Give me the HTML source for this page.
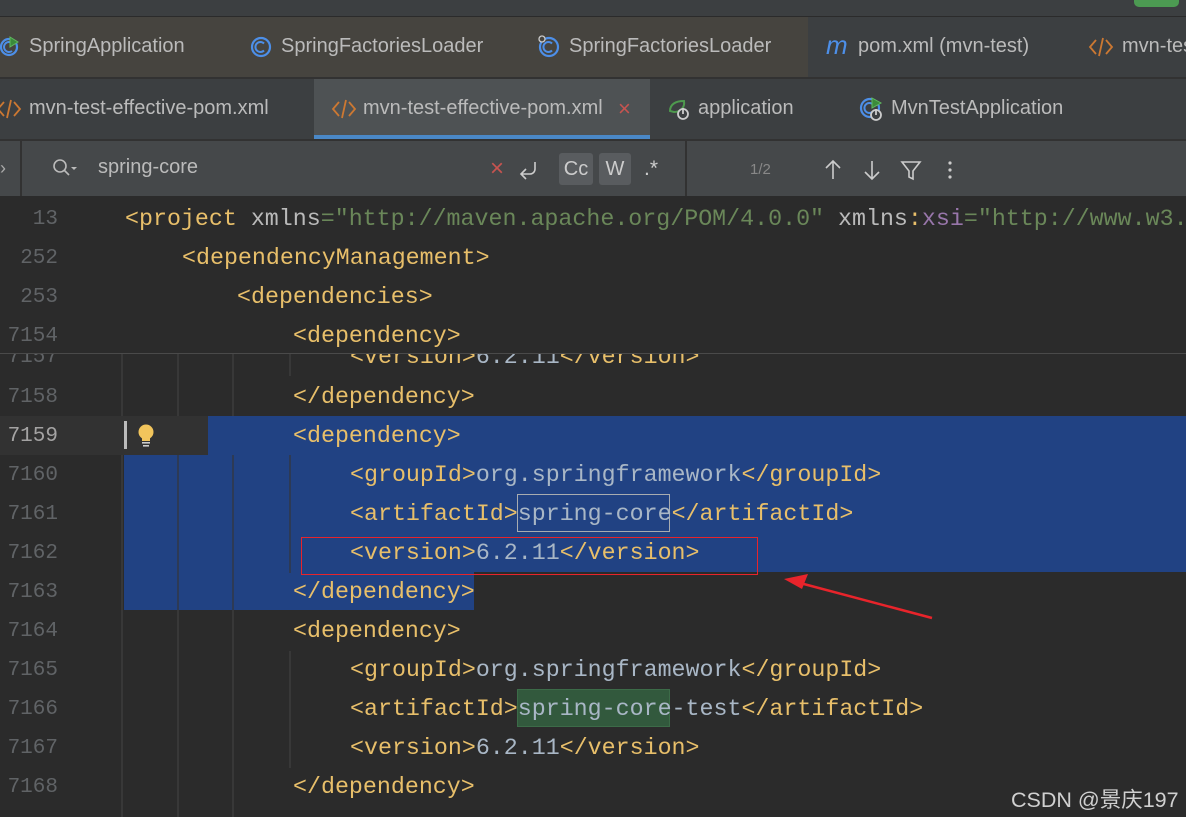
<!DOCTYPE html>
<html><head><meta charset="utf-8"><style>
*{margin:0;padding:0;box-sizing:border-box}
html,body{width:1186px;height:817px;overflow:hidden}
body{background:#2b2b2b;position:relative;font-family:"Liberation Sans","Noto Sans CJK SC",sans-serif}
#w{position:absolute;left:0;top:0;width:1186px;height:817px;overflow:hidden}
.a{position:absolute}
.tab{position:absolute;font-size:20px;color:#bbbbbb;white-space:nowrap}
.code{position:absolute;font-family:"Liberation Mono",monospace;font-size:23.3px;white-space:pre;line-height:39px;height:39px}
.t{color:#e8bf6a}.v{color:#a9b7c6}.s{color:#6a8759}.at{color:#bababa}.p{color:#9876aa}
.ln{position:absolute;left:0;width:58px;text-align:right;font-family:"Liberation Mono",monospace;font-size:21px;color:#606366;line-height:39px;height:39px}
.g{position:absolute;width:2px;background:#383838}
</style></head><body><div id="w">
<!-- top bar -->
<div class="a" style="left:0;top:0;width:1186px;height:16px;background:#3c3f41"></div>
<div class="a" style="left:1134px;top:-6px;width:45px;height:13px;background:#4c9a52;border-radius:5px"></div>
<!-- tab row 1 -->
<div class="a" style="left:0;top:17px;width:1186px;height:60px;background:#3c3f41"></div>
<div class="a" style="left:0;top:17px;width:808px;height:60px;background:#46443f"></div>
<div class="a" style="left:0;top:77px;width:1186px;height:2px;background:#323232"></div>
<svg class="a" style="left:0;top:35px" width="22" height="24"><circle cx="9" cy="12" r="8" fill="none" stroke="#4d8fe8" stroke-width="2.2"/><path d="M12 8a5 5 0 1 0 0 8" fill="none" stroke="#4d8fe8" stroke-width="2"/><path d="M10 2l8 5-8 5z" fill="#3b8a3b" stroke="#5fb85f" stroke-width="1"/></svg>
<div class="tab" style="left:29px;top:35px">SpringApplication</div>
<svg class="a" style="left:250px;top:36px" width="22" height="22"><circle cx="11" cy="11" r="9" fill="none" stroke="#4d8fe8" stroke-width="2.2"/><path d="M14 7.5a5 5 0 1 0 0 7" fill="none" stroke="#4d8fe8" stroke-width="2"/></svg>
<div class="tab" style="left:281px;top:35px">SpringFactoriesLoader</div>
<svg class="a" style="left:537px;top:34px" width="24" height="24"><circle cx="12" cy="13" r="9" fill="none" stroke="#4d8fe8" stroke-width="2.2"/><path d="M15 9.5a5 5 0 1 0 0 7" fill="none" stroke="#4d8fe8" stroke-width="2"/><circle cx="5" cy="5" r="3" fill="#46443f" stroke="#ccc" stroke-width="1.3"/></svg>
<div class="tab" style="left:569px;top:35px">SpringFactoriesLoader</div>
<div class="a" style="left:826px;top:30px;font-size:26px;font-style:italic;color:#4d8fe8">m</div>
<div class="tab" style="left:858px;top:35px">pom.xml (mvn-test)</div>
<svg class="a" style="left:1088px;top:36px" width="26" height="22"><path d="M8 4L2 11l6 7M18 4l6 7-6 7M15 2l-4 18" fill="none" stroke="#cc7832" stroke-width="1.8"/></svg>
<div class="tab" style="left:1122px;top:35px">mvn-test</div>
<!-- tab row 2 -->
<div class="a" style="left:0;top:79px;width:1186px;height:60px;background:#3c3f41"></div>
<div class="a" style="left:314px;top:79px;width:336px;height:60px;background:#4e5254"></div>
<div class="a" style="left:314px;top:135px;width:336px;height:4px;background:#4a88c7"></div>
<svg class="a" style="left:-4px;top:98px" width="26" height="22"><path d="M8 4L2 11l6 7M18 4l6 7-6 7M15 2l-4 18" fill="none" stroke="#cc7832" stroke-width="1.8"/></svg>
<div class="tab" style="left:29px;top:97px">mvn-test-effective-pom.xml</div>
<svg class="a" style="left:331px;top:98px" width="26" height="22"><path d="M8 4L2 11l6 7M18 4l6 7-6 7M15 2l-4 18" fill="none" stroke="#cc7832" stroke-width="1.8"/></svg>
<div class="tab" style="left:363px;top:97px">mvn-test-effective-pom.xml</div>
<div class="a" style="left:618px;top:96px;color:#c75450;font-size:22px">×</div>
<svg class="a" style="left:667px;top:96px" width="26" height="26"><path d="M3 15c0-7 6-10 14-10 1 6-3 11-10 11z" fill="none" stroke="#4e9a4e" stroke-width="2"/><circle cx="16" cy="18" r="5" fill="#3c3f41" stroke="#ccc" stroke-width="1.8"/><path d="M16 12v6" stroke="#ccc" stroke-width="1.8"/></svg>
<div class="tab" style="left:698px;top:97px">application</div>
<svg class="a" style="left:859px;top:95px" width="28" height="28"><circle cx="11" cy="13" r="9" fill="none" stroke="#4d8fe8" stroke-width="2.2"/><path d="M14 9.5a5 5 0 1 0 0 7" fill="none" stroke="#4d8fe8" stroke-width="2"/><path d="M13 3l9 5-9 5z" fill="#3b8a3b" stroke="#5fb85f"/><circle cx="17" cy="20" r="5" fill="#3c3f41" stroke="#ccc" stroke-width="1.8"/><path d="M17 14v6" stroke="#ccc" stroke-width="1.8"/></svg>
<div class="tab" style="left:891px;top:97px">MvnTestApplication</div>
<!-- search bar -->
<div class="a" style="left:0;top:139px;width:1186px;height:2px;background:#323232"></div>
<div class="a" style="left:0;top:141px;width:1186px;height:55px;background:#45484a"></div>
<div class="a" style="left:20px;top:141px;width:2px;height:55px;background:#323232"></div>
<div class="a" style="left:685px;top:141px;width:2px;height:55px;background:#323232"></div>
<div class="a" style="left:0;top:158px;color:#aaa;font-size:18px">›</div>
<svg class="a" style="left:52px;top:158px" width="26" height="22"><circle cx="8" cy="8" r="6" fill="none" stroke="#bbb" stroke-width="1.6"/><path d="M12 12l5 5" stroke="#bbb" stroke-width="1.6"/><path d="M19 9l3 3 3-3z" fill="#bbb"/></svg>
<div class="tab" style="left:98px;top:156px">spring-core</div>
<div class="a" style="left:490px;top:157px;color:#c75450;font-size:24px;line-height:24px">×</div>
<svg class="a" style="left:518px;top:158px" width="26" height="24"><path d="M17 4v7a5 5 0 0 1-5 5H4M8 11l-5 5 5 5" fill="none" stroke="#ccc" stroke-width="1.6"/></svg>
<div class="a" style="left:559px;top:153px;width:34px;height:32px;background:#595c5f;border-radius:3px;color:#ccc;font-size:20px;text-align:center;line-height:32px">Cc</div>
<div class="a" style="left:599px;top:153px;width:32px;height:32px;background:#595c5f;border-radius:3px;color:#ccc;font-size:20px;text-align:center;line-height:32px">W</div>
<div class="a" style="left:644px;top:157px;color:#ccc;font-size:21px">.*</div>
<div class="a" style="left:750px;top:161px;color:#888;font-size:15px">1/2</div>
<svg class="a" style="left:820px;top:158px" width="150" height="24"><path d="M13 3v18M6 10l7-7 7 7" fill="none" stroke="#ccc" stroke-width="1.6"/><path d="M52 3v18M45 14l7 7 7-7" fill="none" stroke="#ccc" stroke-width="1.6"/><path d="M82 4h18l-7 9v8l-4-2v-6z" fill="none" stroke="#ccc" stroke-width="1.6"/><circle cx="130" cy="5" r="1.6" fill="#ccc"/><circle cx="130" cy="12" r="1.6" fill="#ccc"/><circle cx="130" cy="19" r="1.6" fill="#ccc"/></svg>
<!-- editor -->
<div class="a" style="left:0;top:196px;width:1186px;height:621px;background:#2b2b2b"></div>
<div class="g" style="left:121px;top:354px;height:463px"></div>
<div class="g" style="left:177px;top:354px;height:463px"></div>
<div class="g" style="left:232px;top:354px;height:463px"></div>
<div class="g" style="left:289px;top:354px;height:22px"></div>
<div class="g" style="left:289px;top:651px;height:117px"></div>
<div class="a" style="left:0;top:416px;width:208px;height:39px;background:#323232"></div>
<div class="a" style="left:208px;top:416px;width:978px;height:39px;background:#214283"></div>
<div class="a" style="left:124px;top:455px;width:1062px;height:117px;background:#214283"></div>
<div class="a" style="left:124px;top:572px;width:350px;height:38px;background:#214283"></div>
<div class="g" style="left:177px;top:455px;height:155px;background:#2d3a55"></div>
<div class="g" style="left:232px;top:455px;height:155px;background:#2d3a55"></div>
<div class="g" style="left:289px;top:455px;height:118px;background:#2d3a55"></div>
<div class="a" style="left:124px;top:421px;width:3px;height:28px;background:#bbb"></div>
<svg class="a" style="left:136px;top:423px" width="20" height="26"><circle cx="10" cy="9" r="7.5" fill="#f2c55c"/><rect x="6" y="15" width="8" height="3" fill="#f2c55c"/><rect x="6" y="19" width="8" height="1.6" fill="#ccc"/><rect x="7" y="22" width="6" height="1.6" fill="#ccc"/></svg>
<div class="a" style="left:517px;top:494px;width:153px;height:38px;border:1px solid #a8acb0"></div>
<div class="a" style="left:517px;top:689px;width:153px;height:38px;background:#32593d;border:1px solid #3c6b48"></div>
<div class="ln" style="top:338px">7157</div>
<div class="code" style="left:350px;top:338px"><span class="t">&lt;version&gt;</span><span class="v">6.2.11</span><span class="t">&lt;/version&gt;</span></div>
<div class="a" style="left:0;top:196px;width:1186px;height:157px;background:#2b2b2b"></div>
<div class="a" style="left:0;top:353px;width:1186px;height:1px;background:#4a4a4a"></div>
<div class="ln" style="top:200px">13</div>
<div class="code" style="left:125px;top:200px;width:1061px;overflow:hidden"><span class="t">&lt;project </span><span class="at">xmlns</span><span class="s">="http://maven.apache.org/POM/4.0.0" </span><span class="at">xmlns</span><span class="t">:</span><span class="p">xsi</span><span class="s">="http://www.w3.org/2001</span></div>
<div class="ln" style="top:239px">252</div>
<div class="code" style="left:182px;top:239px"><span class="t">&lt;dependencyManagement&gt;</span></div>
<div class="ln" style="top:278px">253</div>
<div class="code" style="left:237px;top:278px"><span class="t">&lt;dependencies&gt;</span></div>
<div class="ln" style="top:317px">7154</div>
<div class="code" style="left:293px;top:317px"><span class="t">&lt;dependency&gt;</span></div>
<div class="ln" style="top:378px">7158</div>
<div class="code" style="left:293px;top:378px"><span class="t">&lt;/dependency&gt;</span></div>
<div class="ln" style="top:417px;color:#a4a3a3">7159</div>
<div class="code" style="left:293px;top:417px"><span class="t">&lt;dependency&gt;</span></div>
<div class="ln" style="top:456px">7160</div>
<div class="code" style="left:350px;top:456px"><span class="t">&lt;groupId&gt;</span><span class="v">org.springframework</span><span class="t">&lt;/groupId&gt;</span></div>
<div class="ln" style="top:495px">7161</div>
<div class="code" style="left:350px;top:495px"><span class="t">&lt;artifactId&gt;</span><span class="v">spring-core</span><span class="t">&lt;/artifactId&gt;</span></div>
<div class="ln" style="top:534px">7162</div>
<div class="code" style="left:350px;top:534px"><span class="t">&lt;version&gt;</span><span class="v">6.2.11</span><span class="t">&lt;/version&gt;</span></div>
<div class="ln" style="top:573px">7163</div>
<div class="code" style="left:293px;top:573px"><span class="t">&lt;/dependency&gt;</span></div>
<div class="ln" style="top:612px">7164</div>
<div class="code" style="left:293px;top:612px"><span class="t">&lt;dependency&gt;</span></div>
<div class="ln" style="top:651px">7165</div>
<div class="code" style="left:350px;top:651px"><span class="t">&lt;groupId&gt;</span><span class="v">org.springframework</span><span class="t">&lt;/groupId&gt;</span></div>
<div class="ln" style="top:690px">7166</div>
<div class="code" style="left:350px;top:690px"><span class="t">&lt;artifactId&gt;</span><span class="v">spring-core-test</span><span class="t">&lt;/artifactId&gt;</span></div>
<div class="ln" style="top:729px">7167</div>
<div class="code" style="left:350px;top:729px"><span class="t">&lt;version&gt;</span><span class="v">6.2.11</span><span class="t">&lt;/version&gt;</span></div>
<div class="ln" style="top:768px">7168</div>
<div class="code" style="left:293px;top:768px"><span class="t">&lt;/dependency&gt;</span></div>
<div class="a" style="left:301px;top:537px;width:457px;height:38px;border:1px solid #e8242b"></div>
<svg class="a" style="left:0;top:0" width="1186" height="817"><path d="M932 618L800 583" stroke="#e8242b" stroke-width="2.5"/><path d="M784 579l24-5-6 15z" fill="#e8242b"/></svg>
<div class="a" style="left:1011px;top:783px;color:#d0d0d0;font-size:21.5px;white-space:nowrap">CSDN @景庆197</div>
</div></body></html>
